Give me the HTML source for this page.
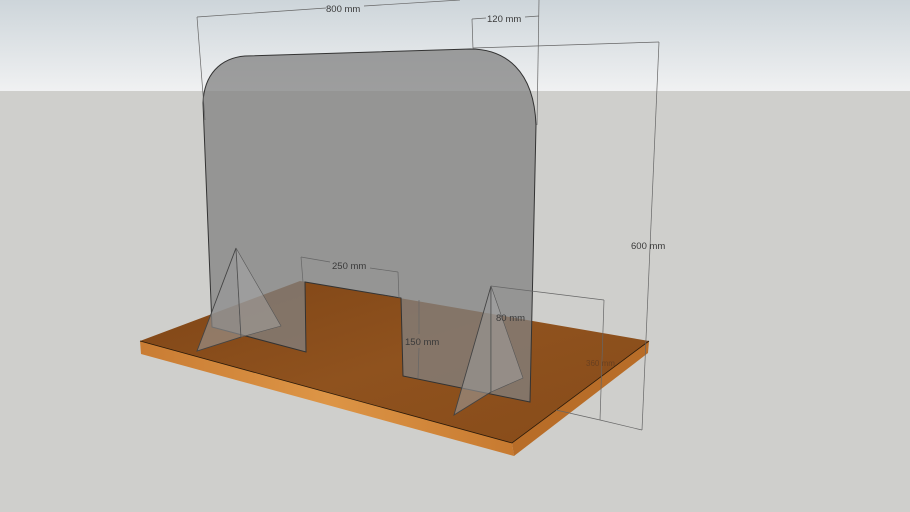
<!DOCTYPE html>
<html><head><meta charset="utf-8"><style>
html,body{margin:0;padding:0;width:910px;height:512px;overflow:hidden;background:#cfcfcc}
svg{display:block}
text{font-family:"Liberation Sans",sans-serif;font-size:9.5px;fill:#3a3a3a}
</style></head><body>
<svg width="910" height="512" viewBox="0 0 910 512">
<defs>
<linearGradient id="sky" x1="0" y1="0" x2="0" y2="1">
<stop offset="0" stop-color="#cdd5da"/><stop offset="1" stop-color="#f0f1f2"/>
</linearGradient>
<linearGradient id="wood" x1="0" y1="0" x2="1" y2="1">
<stop offset="0" stop-color="#7f4516"/><stop offset="0.5" stop-color="#8f521e"/><stop offset="1" stop-color="#874b19"/>
</linearGradient>
<linearGradient id="side" x1="0" y1="0" x2="1" y2="0">
<stop offset="0" stop-color="#c97c33"/><stop offset="0.5" stop-color="#dd9546"/><stop offset="1" stop-color="#c77a30"/>
</linearGradient>
</defs>
<rect x="0" y="0" width="910" height="91" fill="url(#sky)"/>
<rect x="0" y="91" width="910" height="421" fill="#cfcfcc"/>
<polygon points="140,341 300,281 649,341 512,443" fill="url(#wood)"/>
<polygon points="140,341 512,443 514,456 141,354" fill="url(#side)"/>
<polygon points="512,443 649,341 648,353 514,456" fill="#b86d28"/>
<polyline points="140,341 512,443 649,341" fill="none" stroke="#2a1a0a" stroke-width="0.8"/>
<path d="M203,103 C204,75 220,58 245,56 L470,49 C505,49 534,70 536,125 L530,402 L403,376 L401,298 L305,282 L306,352 L212,327 Z" fill="#828282" fill-opacity="0.75" stroke="#333" stroke-width="1"/>
<polygon points="236,248 197,351 241,337" fill="#9a9a9a" fill-opacity="0.6" stroke="#444" stroke-width="0.9"/>
<polygon points="236,248 241,337 281,326" fill="#a5a5a5" fill-opacity="0.5" stroke="#555" stroke-width="0.6"/>
<polygon points="491,286 454,415 491,392" fill="#9a9a9a" fill-opacity="0.6" stroke="#444" stroke-width="0.9"/>
<polygon points="491,286 491,392 523,378" fill="#a5a5a5" fill-opacity="0.5" stroke="#555" stroke-width="0.6"/>
<g stroke="#666" stroke-width="0.7" fill="none">
<line x1="197" y1="17" x2="205" y2="120"/>
<line x1="197" y1="17" x2="326" y2="8"/><line x1="364" y1="6" x2="460" y2="0"/>
<line x1="472" y1="19" x2="473" y2="49"/>
<line x1="472" y1="19" x2="486" y2="18"/><line x1="525" y1="17" x2="539" y2="16"/>
<line x1="539" y1="0" x2="537" y2="125"/>
<line x1="473" y1="48" x2="659" y2="42"/>
<line x1="659" y1="42" x2="642" y2="430"/>
<line x1="600" y1="420" x2="642" y2="430"/>
<line x1="556" y1="410" x2="600" y2="420"/>
<line x1="604" y1="300" x2="600" y2="420"/>
<line x1="491" y1="286" x2="604" y2="300"/>
<line x1="301" y1="257" x2="303" y2="282"/>
<line x1="301" y1="257" x2="330" y2="262"/><line x1="370" y1="268" x2="398" y2="272"/>
<line x1="398" y1="272" x2="399" y2="298"/>
<line x1="419" y1="300" x2="419" y2="334"/><line x1="419" y1="348" x2="418" y2="378"/>
</g>
<g fill="#3a3a3a">
<text x="326" y="12">800 mm</text>
<text x="487" y="22">120 mm</text>
<text x="631" y="249">600 mm</text>
<text x="332" y="269">250 mm</text>
<text x="405" y="345">150 mm</text>
<text x="496" y="321">80 mm</text>
<text x="586" y="366" style="fill:#6a4020;font-size:8px">360 mm</text>
</g>
</svg>
</body></html>
